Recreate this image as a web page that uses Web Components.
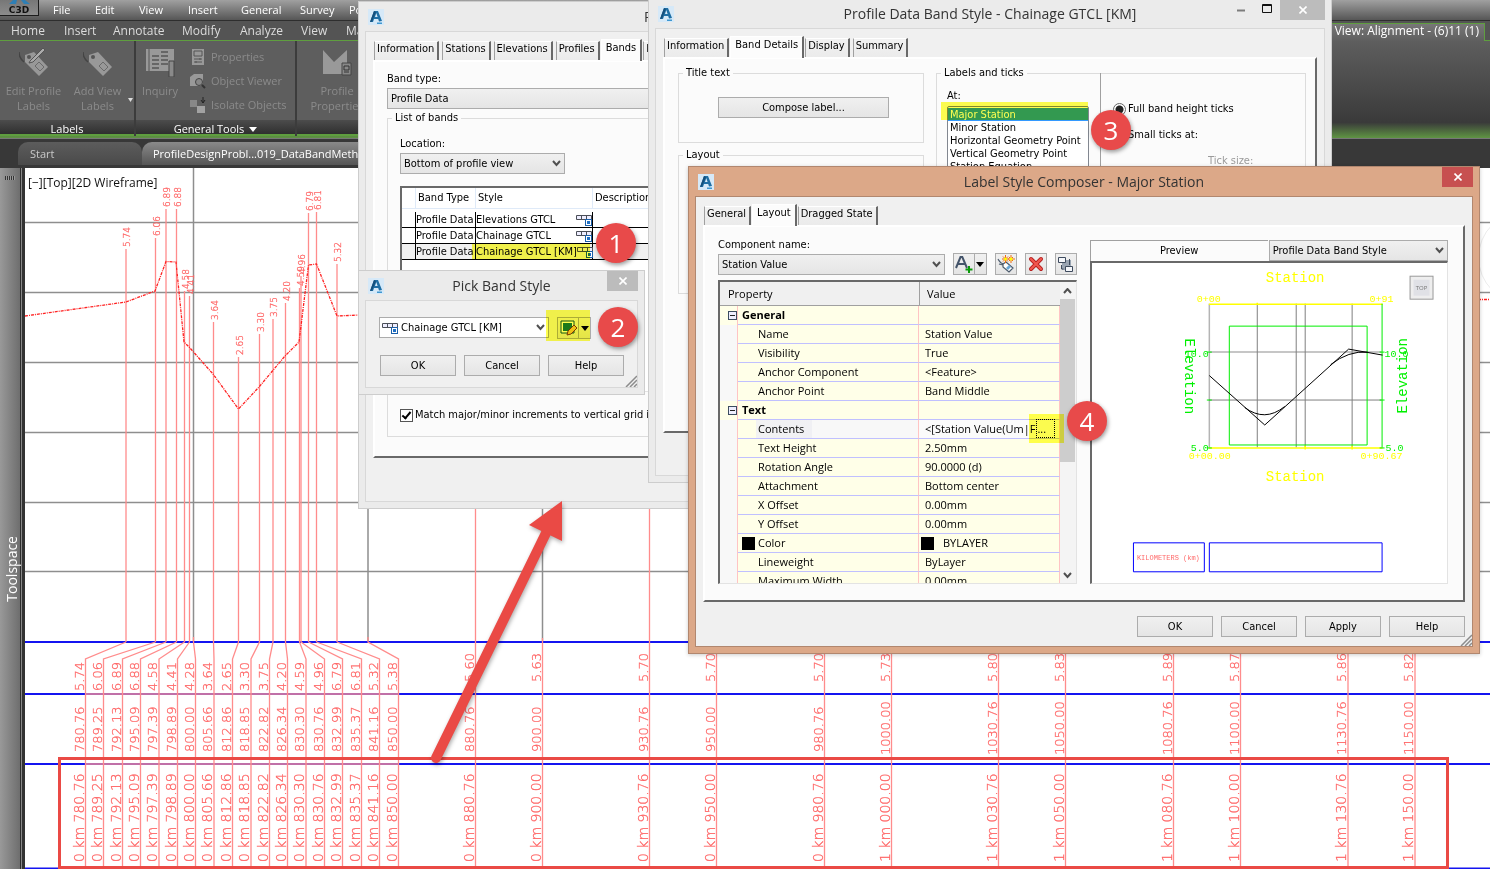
<!DOCTYPE html>
<html lang="en">
<head>
<meta charset="utf-8">
<title>Civil 3D - Profile data band styles</title>
<style>
html,body{margin:0;height:100%;overflow:hidden;background:#fff}
body{font-family:"DejaVu Sans Condensed","DejaVu Sans",sans-serif;font-size:11px;line-height:14px;color:#000}
</style>
</head>
<body>
<cad-app></cad-app>
<script>
const define = (name, render) => customElements.define(name, class extends HTMLElement {
  connectedCallback() {
    if (this.shadowRoot) return;
    const t = document.createElement('template');
    t.innerHTML = '<style>*{box-sizing:border-box}button,select,input{font:inherit;color:inherit;margin:0}</style>' + render(this);
    this.attachShadow({mode: 'open'}).append(t.content.cloneNode(true));
  }
});
const chevron = '<svg class="chev" width="9" height="7" viewBox="0 0 9 7" aria-hidden="true"><path d="M1 1l3.500 4L8 1" fill="none" stroke="#505050" stroke-width="2"/></svg>';

/* ---------- generic controls ---------- */
define('ui-button', el => `<style>
:host{display:block;width:76px;height:21px}
button{display:block;width:100%;height:100%;padding:0;border:1px solid #acacac;background:linear-gradient(#f0f0f0,#e5e5e5)}
</style><button type="button"><slot></slot></button>`);

define('ui-select', el => `<style>
:host{display:block}
label{display:block;height:14px;margin-bottom:2px}
.box{display:grid;grid-template-columns:auto 1fr;height:21px;border:1px solid #acacac;background:linear-gradient(#f0f0f0,#e5e5e5);align-items:center}
:host([plain]) .box{background:#fff}
select{grid-column:2;grid-row:1;appearance:none;border:0;background:none;width:100%;height:19px;padding:0 16px 0 3px;outline:0}
.chev{grid-column:2;grid-row:1;justify-self:end;margin-right:3px;pointer-events:none}
::slotted(svg){margin-left:2px}
</style>${el.hasAttribute('label') ? `<label for="s">${el.getAttribute('label')}</label>` : ''}
<div class="box"><slot></slot><select id="s" aria-label="${el.getAttribute('label') || el.getAttribute('name')}"><option>${el.getAttribute('value')}</option></select>${chevron}</div>`);

define('ui-group', el => `<style>
:host{display:flex;flex-direction:column}
fieldset{flex:1;margin:0;min-width:0;border:1px solid #dcdcdc;padding:0}
legend{margin-left:4px;padding:0 3px;height:14px}
.in{display:flex;flex-direction:column;height:100%;padding:var(--pad,10px)}
</style><fieldset><legend>${el.getAttribute('legend')}</legend><div class="in"><slot></slot></div></fieldset>`);

define('ui-tabs', el => `<style>
:host{display:flex;flex-direction:column;flex:1;min-height:0;padding:7px 7px 0}
[role=tablist]{display:flex;align-items:flex-end;height:21px;padding-left:1px;white-space:nowrap}
button{height:19px;padding:0 3px 4px 2px;margin-right:3px;border:0;border-left:1px solid #a0a0a0;border-right:2px solid #696969;border-top:1px solid #fff;background:linear-gradient(#f2f2f2,#ebebeb)}
button[aria-selected=true]{height:22px;margin:0 1px -1px -2px;padding:0 4px 5px 4px;background:#fcfcfc;border-left-color:#fff;position:relative}
.page{flex:1;min-height:0;display:flex;flex-direction:column;background:#fbfbfb;border:2px solid #fff;border-right-color:#696969;border-bottom-color:#696969}
</style><div role="tablist">${el.getAttribute('tabs').split('|').map(t => `<button type="button" role="tab" aria-selected="${t === el.getAttribute('active')}">${t}</button>`).join('')}</div>
<div class="page" role="tabpanel"><slot></slot></div>`);

define('ui-window', el => `<style>
:host{display:flex;flex-direction:column;position:absolute;padding:0 6px 6px;border:1px solid #cdcdcd;background:#ebebeb;box-sizing:border-box}
:host([tone=active]){background:#dca888;border-color:#b1876f;box-shadow:0 1px 4px #0003}
header{display:grid;grid-template-columns:1fr auto 1fr;height:29px;flex:none;align-items:center}
.logo{margin-left:3px;display:block}
h2{margin:0;font:400 14px/20px "Open Sans",sans-serif;color:#333;white-space:nowrap}
.ctl{display:flex;justify-self:end;align-self:start}
.ctl button{border:0;padding:0;width:26px;height:20px;background:none;display:grid;place-items:center}
.ctl .x{width:31px;background:#bcbcbc}
:host([controls]) .ctl .x{width:45px;height:21px}
:host([tone=active]) .x{background:#c75050!important}
.body{flex:1;min-height:0;display:flex;flex-direction:column;background:#f0f0f0;border:1px solid #d8d8d8;position:relative}
:host([tone=active]) .body{border-color:#b1876f}
.grip{position:absolute;right:0;bottom:0;display:block}
</style><header>
<svg class="logo" width="16" height="16" viewBox="0 0 16 16" aria-hidden="true"><rect width="16" height="16" fill="#d6e9f8"/><path d="M2 13L6 2h4l4 10-3 .5-.8-2.500H6L5 13z" fill="#1f6fa5"/><path d="M7 8l1.300-4L9.600 8z" fill="#d6e9f8"/><path d="M6 2L2 13l2-.5L8 3z" fill="#144f7c"/><path d="M9 13.500h5v1.500H9z" fill="#3f97d0"/></svg>
<h2>${el.getAttribute('heading')}</h2>
<div class="ctl">${el.hasAttribute('controls') ? `<button type="button" aria-label="Minimize"><svg width="10" height="10"><path d="M1 6.500h8" stroke="#7c7c7c" stroke-width="2"/></svg></button><button type="button" aria-label="Maximize"><svg width="11" height="10"><path d="M.5.5h9v8h-9zM0 1.500h10" fill="none" stroke="#111"/></svg></button>` : ''}<button class="x" type="button" aria-label="Close"><svg width="8" height="8"><path d="M.5.500l7 7M7.500.5l-7 7" stroke="#fff" stroke-width="1.600"/></svg></button></div>
</header><div class="body"><slot></slot>${el.hasAttribute('grip') ? '<svg class="grip" width="12" height="12" aria-hidden="true"><path d="M1 12L12 1M5 12l7-7M9 12l3-3" stroke="#8c8c8c" stroke-width="1.500"/></svg>' : ''}</div>`);

const bandIcon = '<svg width="16" height="12" viewBox="0 0 16 12" aria-hidden="true"><path d="M.5 1.500h15v4H.5zM5.500 1.500v4M10.500 1.500v4" fill="#eef" stroke="#4b4f58"/><rect x="9.500" y="5.500" width="6" height="6" fill="#fff" stroke="#1b5fa8"/><rect x="11" y="7" width="3" height="3" fill="#1f6fc4"/></svg>';

/* ---------- ribbon ---------- */
const tag = '<path d="M5 14c-4-3-5-8-5-10" stroke="#444" stroke-width="1.500" fill="none"/><path d="M6 7l9-3 14 15-9 9L6 14z" fill="#989898"/><circle cx="10" cy="9" r="2" fill="#555"/><path d="M16 18l4-4 5 5-4 4z" fill="none" stroke="#6a6a6a"/>';
define('cad-ribbon', () => `<style>
:host{display:block;flex:none;font-family:"Open Sans",sans-serif;font-size:11px;line-height:16px;color:#fff;white-space:nowrap}
.menu{height:21px;display:flex;background:linear-gradient(#a0a0a0,#565656);border-bottom:1px solid #2e2e2e}
.app{width:39px;height:16px;margin-right:14px;background:linear-gradient(#777,#8c8c8c);border:solid #1c1c1c;border-width:0 1px 1px 0;display:grid;justify-items:center;font:700 9px/9px "DejaVu Sans",sans-serif;color:#111}
.app svg{display:block}
nav{display:grid;align-items:center}
nav a{color:inherit;text-decoration:none}
.m{grid-template-columns:42px 44px 49px 53px 59px 49px 49px}
.tabs{height:20px;font-size:12px;display:flex;background:#545454;border-bottom:1px solid #5f9e3f;justify-content:space-between}
.t{grid-template-columns:53px 49px 69px 58px 61px 45px 60px;padding-left:11px;color:#dcdcdc}
.ctx{height:18px;line-height:14px;margin:2px 5px -1px 0;padding:0 5px 0 40px;border:1px solid #5f9e3f;border-bottom:0;background:linear-gradient(#777,#5f5f5f);color:#fff;text-decoration:none}
.body{height:98px;display:flex;background:linear-gradient(#5e5e5e,#3a3a3a 84%,#5f9443);border-bottom:1px solid #777}
.p{display:flex;flex-direction:column;background:#5e5e5e;border-right:2px solid #3c3c3c;margin-bottom:2px;color:#8b8b8b}
.p footer{height:16px;line-height:17px;text-align:center;color:#fff;background:linear-gradient(#4c4c4c,#2f2f2f);border-bottom:2px solid #5f9e3f}
.p footer svg{margin-left:5px;vertical-align:1px}
.c{flex:1;display:flex;min-height:0}
button{border:0;background:none;color:inherit;padding:0;display:flex;align-items:center;text-align:left}
.big{flex-direction:column;text-align:center;line-height:15px;padding-top:7px;gap:6px}
.big svg{flex:none}
.drop{align-self:flex-end;margin-bottom:18px}
.col{display:flex;flex-direction:column;padding:4px 0 0 7px}
.col button{height:24px;gap:5px}
.p1{width:136px}.p1 .big{width:67px}.p1 .big+.big{width:61px}.p2{width:161px}.p2 .big{width:46px;margin-left:1px}.p3{width:240px}.p3 .big{width:80px}
.files{height:29px;display:flex;align-items:flex-end;background:#383838;padding:0 0 3px 18px}
.files a{height:23px;line-height:23px;color:#c8c8c8;text-decoration:none;padding:0 12px;border-radius:10px 10px 0 0;background:linear-gradient(#5c5c5c,#4a4a4a);width:124px}
.files a.on{color:#fff;width:260px;padding-left:11px;background:linear-gradient(#8a8a8a,#555)}
</style>
<div class="menu"><div class="app"><svg width="26" height="5"><path d="M3 4l4-4h4l-1 4zM15 0h4l5 4h-6z" fill="#2e7fb5"/></svg>C3D</div>
<nav class="m">${['File', 'Edit', 'View', 'Insert', 'General', 'Survey', 'Points'].map(x => `<a href="#">${x}</a>`).join('')}</nav></div>
<div class="tabs"><nav class="t">${['Home', 'Insert', 'Annotate', 'Modify', 'Analyze', 'View', 'Manage'].map(x => `<a href="#">${x}</a>`).join('')}</nav><a class="ctx" href="#">View: Alignment - (6)11 (1)</a></div>
<div class="body">
<section class="p p1"><div class="c">
<button class="big" type="button"><svg width="30" height="29">${tag}<path d="M11 13L24 0l2 2-12 12-4 1z" fill="#aaa" stroke="#555"/></svg><span>Edit Profile<br>Labels</span></button>
<button class="big" type="button"><svg width="30" height="29">${tag}</svg><span>Add View<br>Labels</span></button><svg class="drop" width="5" height="4"><path d="M0 0h5L2.500 4z" fill="#ddd"/></svg></div><footer>Labels</footer></section>
<section class="p p2"><div class="c">
<button class="big" type="button"><svg width="30" height="29"><path d="M1 1h28v22H1z" fill="#999"/><path d="M4 1v22" stroke="#555"/><path d="M7 8h7M7 12h7M7 16h7M7 20h7M16 8h7M16 12h7M16 16h7M16 4h7" stroke="#666" stroke-width="2"/><path d="M24 13h5v16h-5z" fill="#8a8a8a" stroke="#444"/></svg><span>Inquiry</span></button>
<div class="col">
<button type="button"><svg width="16" height="16"><path d="M2 0h12v16H2z" fill="#999"/><path d="M4 2h8v5H4zM4 10h8M4 13h8M10 9v2M6 12v2" fill="none" stroke="#555"/></svg>Properties</button>
<button type="button"><svg width="16" height="16"><path d="M0 4l4-3h9v9l-3 3H0z" fill="#999"/><circle cx="9" cy="9" r="3.500" fill="#888" stroke="#444"/><path d="M12 12l3 3" stroke="#333" stroke-width="2"/></svg>Object Viewer</button>
<button type="button"><svg width="16" height="16"><path d="M0 3h7v7H0z" fill="#888"/><path d="M7 9h8v7H7z" fill="#a2a2a2"/><path d="M13 0v6M11 3l2 3 2-3" stroke="#222" fill="none"/></svg>Isolate Objects</button>
</div></div><footer>General Tools<svg width="8" height="5"><path d="M0 0h8L4 5z" fill="#fff"/></svg></footer></section>
<section class="p p3"><div class="c"><button class="big" type="button"><svg width="30" height="29"><path d="M1 2l11 12L25 2v24H1z" fill="#999"/><path d="M20 15h9v12h-9z" fill="#888" stroke="#444"/><path d="M22 18h5v4h-5zM22 24h5" fill="none" stroke="#333"/></svg><span>Profile<br>Properties</span></button></div><footer></footer></section>
</div>
<div class="files"><a href="#">Start</a><a class="on" href="#">ProfileDesignProbl...019_DataBandMethod</a></div>`);

/* ---------- tool palette rail ---------- */
define('cad-rail', () => `<style>
:host{display:flex;flex-direction:column;justify-content:space-between;flex:none;width:25px;padding-bottom:267px;background:linear-gradient(90deg,#999,#6e6e6e 20px,#2d2d2d 20px,#2d2d2d 21px,#888 21px,#888 22px,#333 22px)}
span{writing-mode:vertical-rl;transform:rotate(180deg);width:20px;margin-left:2px;font:14px/20px "Open Sans",sans-serif;color:#fff}
i{display:block;width:10px;height:4px;margin:8px 0 0 5px;background:repeating-linear-gradient(90deg,#333 0 1px,#999 1px 2px)}
</style><i></i><span>Toolspace</span>`);

/* ---------- profile drawing ---------- */
const spots = [[126,249,'5.74'],[155.5,238,'6.06'],[166,209,'6.89'],[176.500,209,'6.88'],[184.500,291,'4.58'],[189.500,296,'4.41'],[193.500,0],[213.500,322,'3.64'],[238.500,357,'2.65'],[259.500,334,'3.30'],[273,319,'3.75'],[285.500,303,'4.20'],[299.500,288,'4.59'],[301,276,'4.96'],[308.500,213,'6.79'],[316.500,212,'6.81'],[337,264,'5.32'],[368,0]];
const cols = [[85.500,'5.74','780.76'],[103.500,'6.06','789.25'],[122.500,'6.89','792.13'],[140.500,'6.88','795.09'],[159,'4.58','797.39'],[177.500,'4.41','798.89'],[195.500,'4.28','800.00'],[214,'3.64','805.66'],[232.500,'2.65','812.86'],[251,'3.30','818.85'],[269.500,'3.75','822.82'],[287.500,'4.20','826.34'],[306,'4.59','830.30'],[324.500,'4.96','830.76'],[342.500,'6.79','832.99'],[361.500,'6.81','835.37'],[379.500,'5.32','841.16'],[398.500,'5.38','850.00']];
const wide = [[475.500,'5.60','880.76'],[542.500,'5.63','900.00'],[649.500,'5.70','930.76'],[716.500,'5.70','950.00'],[824.500,'5.70','980.76'],[891.500,'5.73','1000.00'],[998.500,'5.80','1030.76'],[1065.500,'5.83','1050.00'],[1173.500,'5.89','1080.76'],[1240.500,'5.87','1100.00'],[1348,'5.86','1130.76'],[1415,'5.82','1150.00']];
const up = (x, y, s, c = '') => `<text transform="translate(${x} ${y}) rotate(-90)" class="${c}">${s}</text>`;
const km = s => s.length > 6 ? '1 km ' + s.slice(1) : '0 km ' + s;
define('profile-drawing', () => `<style>
:host{display:block;flex:1;min-width:0;overflow:hidden;background:#fff}
svg{display:block;width:100%;height:100%}
text{font:200 13px "DejaVu Sans",sans-serif;fill:#ff5a5a;stroke:#ff6a6a;stroke-width:.3px}
.km{font-size:14px}
.s{font-size:9px}
.v{font:12px "Open Sans",sans-serif;fill:#111;stroke:none}
.g{stroke:#8e8e8e;stroke-width:1.500}.b{stroke:#1414f0;stroke-width:2}.k{stroke:#ff8c8c;stroke-width:1.300;fill:none}
</style><svg role="img" aria-label="Profile view with data bands"><g transform="translate(-25 -168)">
${[222.500,292.500,362.500,432.500,502.500,571.500].map(y => `<path class="g" d="M25 ${y}H4000"/>`).join('')}
<path class="g" d="M193.500 168V641M368 168V641M542.500 168V641M716.500 168V641M891.500 168V641"/>
${[642,694,764,868.500].map(y => `<path class="b" d="M25 ${y}H4000"/>`).join('')}
<path d="M85 694H398M85 764H398" stroke="#c070a8" stroke-width="2"/>
${spots.map(([x, y, s], i) => (s ? `<path class="k" d="M${x} ${y}V642"/>` + up(x + 4, y - 2, s, 's') : '') + `<path class="k" d="M${x} ${s ? 642 : 637}L${x} 642 ${cols[i][0]} 659V868"/>`).join('')}
${wide.map(([x], i) => `<path class="k" d="M${x} ${[1, 3, 5].includes(i) ? 638 : 500}V868"/>`).join('')}
${cols.map(([x, a, b]) => up(x - 2, 691, a) + up(x - 2, 752, b) + up(x - 2, 862, km(b), 'km')).join('')}
${wide.map(([x, a, b]) => up(x - 2, 682, a) + up(x - 2, b.length > 6 ? 755 : 752, b) + up(x - 2, 862, km(b), 'km')).join('')}
<path d="M25 316L126 302 155 291 166 261.500 176 262 184 342 190 348 213 374 238.500 409 259 387 285 356 299 342 308.500 265 316.500 264 337 316 360 315M1478 299.500H1500" fill="none" stroke="#f22" stroke-width="1.300" stroke-dasharray="3 1 1 1"/>
<path d="M1492 225A46 46 0 0 0 1492 290" fill="none" stroke="#ececec"/>
<text class="v" x="28" y="187">[−][Top][2D Wireframe]</text>
</g></svg>`);

/* ---------- data tables ---------- */
define('band-table', () => `<style>
:host{display:block;flex:1;min-height:0;overflow:hidden;background:#fff;border:2px solid #696969;border-right:0;border-bottom:1px solid #e3e3e3}
table{border-collapse:separate;border-spacing:0;table-layout:fixed;width:100%}
th{font-weight:400;text-align:left;height:21px;padding:0 0 0 2px;border-right:1px solid #dfeaf8;border-bottom:1px solid #dfeaf8}
td{height:16px;padding:0;border-right:1px solid #000;border-bottom:1px solid #000;white-space:nowrap;line-height:14px}
tbody:before{content:"";display:block;height:3px}
tr.on td{background:#f0f0f0}
div{display:flex;justify-content:space-between;align-items:center;height:15px}
svg{display:block;flex:none}
</style><table><colgroup><col style="width:14px"><col style="width:60px"><col style="width:117px"><col></colgroup>
<thead><tr><th></th><th>Band Type</th><th>Style</th><th>Description</th></tr></thead><tbody>
${['Elevations GTCL', 'Chainage GTCL', 'Chainage GTCL [KM]'].map((s, i) => `<tr class="${i == 2 ? 'on' : ''}"><td></td><td>Profile Data</td><td><div>${s}${bandIcon}</div></td><td></td></tr>`).join('')}
</tbody></table>`);

const props = [['General'],['Name','Station Value'],['Visibility','True'],['Anchor Component','&lt;Feature&gt;'],['Anchor Point','Band Middle'],['Text'],['Contents','&lt;[Station Value(Um|F...'],['Text Height','2.50mm'],['Rotation Angle','90.0000 (d)'],['Attachment','Bottom center'],['X Offset','0.00mm'],['Y Offset','0.00mm'],['Color','BYLAYER'],['Lineweight','ByLayer'],['Maximum Width','0.00mm']];
define('property-grid', () => `<style>
:host{display:flex;flex:1;min-height:0;overflow:hidden;border:2px solid #696969;border-right:1px solid #e3e3e3;border-bottom:1px solid #e3e3e3;background:#f0f0f0;font-family:"Open Sans",sans-serif;font-size:11px}
.w{flex:1;overflow:hidden}
table{width:100%;table-layout:fixed;border-collapse:separate;border-spacing:0}
th{height:24px;padding:0 0 0 8px;text-align:left;font-weight:400;border-bottom:1px solid #a0a0a0}
th+th{padding-left:7px;border-left:1px solid #a0a0a0}
td{height:19px;padding:0 0 0 6px;background:#ffffe8;border-right:1px solid #ffc4c4;border-bottom:1px solid #c0c0ff;white-space:nowrap;line-height:16px}
td.t{padding:0;background:#f8f8f8;border-bottom:0}
td.n{padding-left:20px}
tr.h td.t{background:#ffffe8}tr.h td.n{padding-left:4px;font-weight:700}
td svg{display:block;margin-left:8px}
.sel td.n{background:linear-gradient(90deg,#ffffe8 18px,#f2f2f2 18px,#f0f0f4 74px,#f8f8f8 74px)}
.sel td.v{background:#fbfbfb}
i{display:inline-block;width:13px;height:13px;background:#000;vertical-align:-3px}
.n i{margin:0 3px 0 -16px}.v i{margin:0 9px 0 -4px}
.dots{outline:1px dotted #000;outline-offset:-1px;padding:2px 9px 2px 1px;margin-left:1px}
.sb{width:16px;display:flex;flex-direction:column;align-items:center;background:#f4f4f4;padding:6px 0 4px}
.sb b{display:block;width:15px;height:163px;background:#cdcdcd;margin:5px 0 auto}
</style><div class="w"><table><colgroup><col style="width:18px"><col style="width:181px"><col></colgroup>
<thead><tr><th colspan="2">Property</th><th>Value</th></tr></thead><tbody>
${props.map(([n, v]) => v === undefined ? `<tr class="h"><td class="t"><svg width="9" height="9"><rect x=".5" y=".5" width="8" height="8" fill="#eef" stroke="#3c4c60"/><path d="M2 4.500h5" stroke="#222"/></svg></td><td class="n">${n}</td><td></td></tr>` : `<tr class="${n == 'Contents' ? 'sel' : ''}"><td class="t"></td><td class="n">${n == 'Color' ? '<i></i>' : ''}${n}</td><td class="v">${n == 'Color' ? '<i></i>' : ''}${n == 'Contents' ? v.replace('...', '<span class="dots">...</span>') : v}</td></tr>`).join('')}
</tbody></table></div><div class="sb" aria-hidden="true"><svg width="9" height="6"><path d="M1 5l3.500-4L8 5" fill="none" stroke="#505050" stroke-width="2"/></svg><b></b>${chevron}</div>`);

define('style-preview', () => `<style>
:host{display:block;flex:1;min-height:0;background:#fff;border:2px solid #696969;border-right:1px solid #e3e3e3;border-bottom:1px solid #e3e3e3}
svg{display:block;width:100%;height:100%}
text{font:14px "Liberation Mono",monospace}
.y{fill:#ffff00}.n{fill:#00f000}.s{font-size:10px}
</style><svg viewBox="1092 264 356 319" role="img" aria-label="Style preview">
<g fill="none"><path d="M1209.500 304V448M1209.500 352.500H1382" stroke="#b4b4b4" stroke-width="1.500"/><path d="M1257.500 304V448M1296.500 304V448M1305.500 304V448M1352.500 304V448M1209 400.500H1382" stroke="#808080"/>
<path d="M1209 304.500H1383M1209 448.500H1383M1257.500 303v2M1305.500 446v4M1352.500 446v4" stroke="#ff0" stroke-width="1.500"/><path d="M1382.500 304V448M1229.500 326.500H1367.500V445.500H1229.500zM1207 352.500h5M1207 400.500h5M1207 448.500h5M1380 352.500h5M1380 400.500h5M1380 448.500h5" stroke="#0e0"/>
<path d="M1209.500 376L1265 425.500 1349 349.500 1383 355.500M1245 408Q1265 423 1285 407M1331 365Q1349 351 1368 352.500" stroke="#000"/></g>
<text class="y" x="1266" y="282">Station</text><text class="y" x="1266" y="482">Station</text>
<g class="y"><text class="s" x="1197" y="302">0+00</text><text class="s" x="1370" y="302">0+91</text><text class="s" x="1189" y="460">0+00.00</text><text class="s" x="1361" y="460">0+90.67</text></g>
<g class="n"><text transform="translate(1185 339) rotate(90)">Elevation</text><text transform="translate(1407 414) rotate(-90)">Elevation</text>
<text class="s" x="1185" y="357">10.0</text><text class="s" x="1385" y="357">10.0</text><text class="s" x="1191" y="452">5.0</text><text class="s" x="1386" y="452">5.0</text></g>
<path d="M1133.500 543.500h71v29h-71zM1209.500 543.500h173v29h-173z" fill="none" stroke="#00f"/>
<text x="1137" y="561" style="font-size:7px;fill:#ff6a6a">KILOMETERS (km)</text>
<rect x="1410.500" y="276.500" width="23" height="23" fill="#eee" stroke="#999"/><rect x="1414" y="280" width="16" height="16" fill="#e0e1e6"/><text x="1422" y="290" text-anchor="middle" style="font:6px 'Open Sans',sans-serif;fill:#777">TOP</text>
</svg>`);

/* ---------- tool buttons ---------- */
define('tool-button', el => `<style>
:host{display:block;flex:none;height:22px}
button{display:flex;align-items:center;height:22px;padding:0;border:1px solid #acacac;background:linear-gradient(#f0f0f0,#e5e5e5)}
.i{width:20px;height:20px;display:grid;place-items:center}
.d{width:12px;height:20px;display:grid;place-items:center;border-left:1px solid #acacac}
</style><button type="button" aria-label="${el.getAttribute('name')}"><span class="i"><slot></slot></span>${el.hasAttribute('drop') ? '<span class="d"><svg width="8" height="5"><path d="M0 0h8L4 5z"/></svg></span>' : ''}</button>`);

/* ---------- annotations ---------- */
define('step-badge', () => `<style>
:host{position:absolute;width:40px;height:40px;border-radius:50%;background:#e84a4a;color:#fff;display:grid;place-items:center;font:26px/40px "Open Sans",sans-serif;box-shadow:1px 2px 4px #0006}
</style><slot></slot>`);
define('marker-pen', () => `<style>:host{position:absolute;display:block;background:#ffff50;mix-blend-mode:multiply;pointer-events:none}</style>`);
define('red-pointer', () => `<style>:host{position:absolute;left:0;right:0;top:0;bottom:0;pointer-events:none}svg{display:block;width:100%;height:100%;filter:drop-shadow(1px 2px 2px #0005)}</style>
<svg aria-hidden="true"><path d="M436 758L546 533" stroke="#ea4a45" stroke-width="10" stroke-linecap="round"/><path d="M562 501V541L529 525z" fill="#ea4a45"/></svg>`);

/* ---------- dialogs ---------- */
define('profile-view-form', () => `<style>
:host{display:flex;flex-direction:column;flex:1;min-height:0;margin-bottom:43px}
.f{flex:1;min-height:0;display:flex;flex-direction:column;padding:10px 12px 19px}
ui-group{flex:1;min-height:0;margin-top:2px;--pad:12px 0 14px 12px}
.loc{width:165px;margin-bottom:12px}
.ck{display:flex;align-items:center;height:14px;margin-top:16px;gap:2px;white-space:nowrap}
.ck input{appearance:none;width:13px;height:13px;border:1px solid #555;background:#fff;margin:0;display:grid;place-items:center}
.ck input:checked:after{content:"";width:3px;height:7px;border:solid #000;border-width:0 2px 2px 0;transform:rotate(40deg);margin-top:-2px}
</style><ui-tabs tabs="Information|Stations|Elevations|Profiles|Bands|Hatch" active="Bands"><div class="f">
<ui-select label="Band type:" value="Profile Data"></ui-select>
<ui-group legend="List of bands"><ui-select class="loc" label="Location:" value="Bottom of profile view"></ui-select><band-table></band-table>
<label class="ck"><input type="checkbox" checked>Match major/minor increments to vertical grid intervals</label></ui-group>
</div></ui-tabs>`);

define('band-style-form', () => `<style>
:host{display:flex;flex-direction:column;flex:1;min-height:0;margin-bottom:42px}
.f{display:grid;grid-template-columns:246px 1fr;gap:12px;padding:7px 9px 0 13px}
.l{display:grid;grid-template-rows:77px 146px;gap:5px}
.l ui-button{width:171px;margin:7px 0 0 29px}
.r{--pad:0 0 0 10px}
.in{display:grid;grid-template-columns:142px 1fr;gap:11px;flex:1}
label{display:block;height:14px}
.a{padding-top:9px}
select{font:inherit;line-height:13px;width:100%;height:140px;padding:1px 0 0;border:1px solid #828790;background:#fff;margin-top:3px;overflow:hidden;outline:0}
option{padding:0 2px;height:13px;min-height:13px;line-height:13px}
option:checked{background:#39f linear-gradient(#39f,#39f);color:#fff;-webkit-text-fill-color:#fff}
.b{border-left:1px solid #a0a0a0;margin-top:-7px;padding:29px 0 0 12px}
.b label{display:flex;align-items:center;gap:2px;margin-bottom:12px}
input{appearance:none;width:13px;height:13px;border:1px solid #666;border-radius:50%;background:#fff;margin:0}
input:checked{background:radial-gradient(#222 3.500px,#fff 4.500px)}
.dis{color:#9a9a9a;margin-left:95px}
</style><ui-tabs tabs="Information|Band Details|Display|Summary" active="Band Details"><div class="f">
<div class="l"><ui-group legend="Title text"><ui-button>Compose label...</ui-button></ui-group><ui-group legend="Layout"></ui-group></div>
<ui-group class="r" legend="Labels and ticks"><div class="in"><div class="a"><label for="at">At:</label><select id="at" size="8"><option selected>Major Station</option><option>Minor Station</option><option>Horizontal Geometry Point</option><option>Vertical Geometry Point</option><option>Station Equation</option></select></div>
<div class="b"><label><input type="radio" name="t" checked>Full band height ticks</label><label><input type="radio" name="t">Small ticks at:</label><div class="dis">Tick size:</div></div></div></ui-group>
</div></ui-tabs>`);

define('composer-form', () => `<style>
:host{display:flex;flex-direction:column;flex:1;min-height:0}
.f{flex:1;min-height:0;display:grid;grid-template-columns:1fr 1fr;gap:13px;padding:11px 15px 16px 13px}
.l,.r{display:flex;flex-direction:column;min-height:0;min-width:0}
.row{display:flex;align-items:flex-end;gap:8px;margin-bottom:5px}
.row ui-select{flex:1}
.r{padding-top:2px}
.top{display:grid;grid-template-columns:1fr 1fr;height:21px}
.pv{border:solid #a0a0a0;border-width:1px 0 0 1px;text-align:center;line-height:20px;margin-right:1px}
.btns{display:flex;justify-content:flex-end;gap:8px;padding:14px 7px 9px}
</style><ui-tabs tabs="General|Layout|Dragged State" active="Layout"><div class="f">
<div class="l"><div class="row"><ui-select label="Component name:" value="Station Value"></ui-select>
<tool-button name="Add component" drop><svg width="18" height="18"><path d="M1 13L5.500 2h1.800L12 13M3 9h7" fill="none" stroke="#44546a" stroke-width="2"/><path d="M14 11v7M10.500 14.500h7" stroke="#0a9a0a" stroke-width="2"/></svg></tool-button>
<tool-button name="Copy component"><svg width="18" height="18"><path d="M1 4c2 3 2 4 5 5l3-2 7 6-4 4-6-5V9M2 9l4 1" fill="#fff" stroke="#4b5a6c" stroke-width="1.200"/><path d="M9 13l3-3 2 2-3 3z" fill="#6aa7d8"/><path d="M8.500 0v8M5 4h7M6 1.500l5 5M11 1.500l-5 5M14 0v8M11 4h7M12 2l4 4M16 2l-4 4" stroke="#f06a10"/><circle cx="8.500" cy="4" r="1.500" fill="#ff0"/><circle cx="14" cy="4" r="1.500" fill="#ff0"/></svg></tool-button>
<tool-button name="Delete component"><svg width="16" height="16"><path d="M3 3l10 10M13 3L3 13" stroke="#b31b1b" stroke-width="4" stroke-linecap="round"/><path d="M3 3l10 10M13 3L3 13" stroke="#f0564e" stroke-width="2.400" stroke-linecap="round"/></svg></tool-button>
<tool-button name="Component draw order"><svg width="17" height="17"><path d="M5 4h9v10H5z" fill="#9aa5b3"/><path d="M1.500 1.500h7v5h-7zM8.500 10.500h7v5h-7z" fill="#f4f6fa" stroke="#3e4b5e"/><path d="M4.500 9v4h2M12.500 3v6" fill="none" stroke="#3e4b5e"/></svg></tool-button></div>
<property-grid></property-grid></div>
<div class="r"><div class="top"><div class="pv">Preview</div><ui-select name="Preview style" value="Profile Data Band Style"></ui-select></div><style-preview></style-preview></div>
</div></ui-tabs>
<div class="btns"><ui-button>OK</ui-button><ui-button>Cancel</ui-button><ui-button>Apply</ui-button><ui-button>Help</ui-button></div>`);

define('pick-style-form', () => `<style>
:host{display:flex;flex-direction:column;gap:16px;padding:16px 13px 0}
.row{display:flex;gap:8px}
.row ui-select{width:170px}
.b{padding-left:1px}
</style><div class="row"><ui-select plain name="Band style" value="Chainage GTCL [KM]">${bandIcon}</ui-select>
<tool-button name="Edit current selection" drop><svg width="17" height="16"><path d="M1 1h13v12H1z" fill="#fff" stroke="#13563a"/><path d="M3 3h9v8H3z" fill="#1d7a52"/><path d="M7 15l1-4 6-6 3 3-6 6z" fill="#f0c040" stroke="#7a3a10"/></svg></tool-button></div>
<div class="row b"><ui-button>OK</ui-button><ui-button>Cancel</ui-button><ui-button>Help</ui-button></div>`);

/* ---------- application ---------- */
define('cad-app', () => `<style>
:host{display:flex;flex-direction:column;height:100vh;position:relative;overflow:hidden}
main{flex:1;min-height:0;display:flex}
.w1{left:358px;top:1px;width:720px;height:508px}
.w2{left:648px;top:-2px;width:684px;height:485px}
.w3{left:688px;top:166px;width:792px;height:488px}
.w4{left:358px;top:270px;width:287px;height:125px}
.frame{position:absolute;left:58px;top:757px;width:1391px;height:112px;border:3px solid #ea4a45}
.m1{left:472px;top:244px;width:118px;height:16px}.m2{left:546px;top:310px;width:44px;height:31px}
.m3{left:941px;top:102px;width:147px;height:18px}.m4{left:1029px;top:414px;width:35px;height:29px}
.b1{left:596px;top:223px}.b2{left:598px;top:307px}.b3{left:1091px;top:110px}.b4{left:1067px;top:401px}
</style><cad-ribbon></cad-ribbon><main><cad-rail></cad-rail><profile-drawing></profile-drawing></main>
<ui-window class="w1" heading="Profile View Properties"><profile-view-form></profile-view-form></ui-window>
<ui-window class="w2" heading="Profile Data Band Style - Chainage GTCL [KM]" controls><band-style-form></band-style-form></ui-window>
<ui-window class="w3" tone="active" heading="Label Style Composer - Major Station" grip><composer-form></composer-form></ui-window>
<ui-window class="w4" heading="Pick Band Style" grip><pick-style-form></pick-style-form></ui-window>
<marker-pen class="m1"></marker-pen><marker-pen class="m2"></marker-pen><marker-pen class="m3"></marker-pen><marker-pen class="m4"></marker-pen>
<div class="frame"></div><red-pointer></red-pointer>
<step-badge class="b1">1</step-badge><step-badge class="b2">2</step-badge><step-badge class="b3">3</step-badge><step-badge class="b4">4</step-badge>`);
</script>
</body>
</html>
